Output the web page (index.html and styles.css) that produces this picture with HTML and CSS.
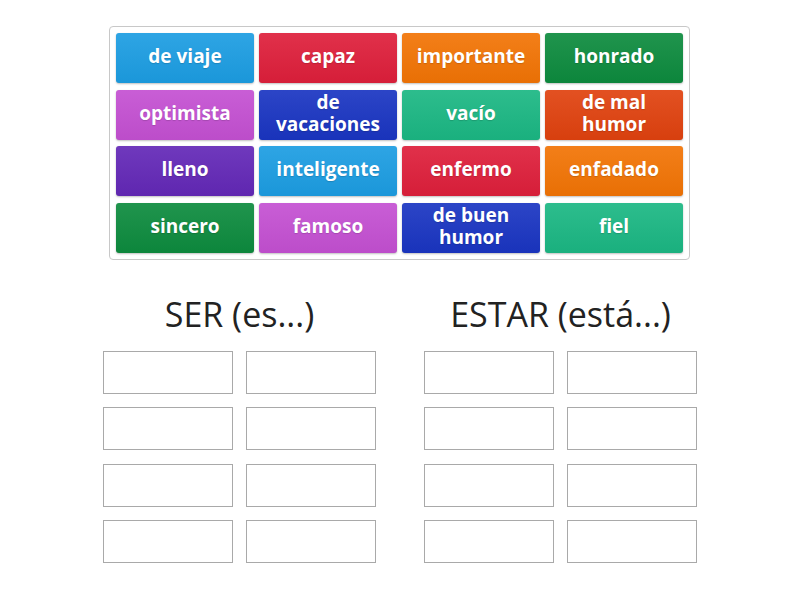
FILE: index.html
```html
<!DOCTYPE html>
<html lang="es">
<head>
<meta charset="utf-8">
<title>SER / ESTAR</title>
<link rel="stylesheet" href="styles.css">
</head>
<body>
<div class="page">
  <div class="bank">
    <div class="tile c-blue">de viaje</div>
    <div class="tile c-red">capaz</div>
    <div class="tile c-orange">importante</div>
    <div class="tile c-green">honrado</div>
    <div class="tile c-magenta">optimista</div>
    <div class="tile c-navy">de vacaciones</div>
    <div class="tile c-teal">vacío</div>
    <div class="tile c-redorange">de mal humor</div>
    <div class="tile c-purple">lleno</div>
    <div class="tile c-blue">inteligente</div>
    <div class="tile c-red">enfermo</div>
    <div class="tile c-orange">enfadado</div>
    <div class="tile c-green">sincero</div>
    <div class="tile c-magenta">famoso</div>
    <div class="tile c-navy">de buen humor</div>
    <div class="tile c-teal">fiel</div>
  </div>
  <div class="groups">
    <div class="group">
      <h2 class="group-title">SER (es...)</h2>
      <div class="slots">
        <div class="slot"></div><div class="slot"></div>
        <div class="slot"></div><div class="slot"></div>
        <div class="slot"></div><div class="slot"></div>
        <div class="slot"></div><div class="slot"></div>
      </div>
    </div>
    <div class="group">
      <h2 class="group-title">ESTAR (está...)</h2>
      <div class="slots">
        <div class="slot"></div><div class="slot"></div>
        <div class="slot"></div><div class="slot"></div>
        <div class="slot"></div><div class="slot"></div>
        <div class="slot"></div><div class="slot"></div>
      </div>
    </div>
  </div>
</div>
</body>
</html>
```

FILE: styles.css
```css
* { box-sizing: border-box; }
html, body { margin: 0; padding: 0; background: #fff; }
body {
  font-family: "Open Sans", "Liberation Sans", sans-serif;
  color: #222;
}
.page {
  width: 800px;
  height: 600px;
  padding-top: 26px;
  display: flex;
  flex-direction: column;
  align-items: center;
}
.bank {
  margin-left: -1px;
  display: grid;
  grid-template-columns: repeat(4, 138px);
  grid-auto-rows: 50px;
  column-gap: 5px;
  row-gap: 6.5px;
  padding: 6px;
  border: 1px solid #c8c8c8;
  border-radius: 4px;
  background: #fff;
}
.tile {
  display: flex;
  align-items: center;
  justify-content: center;
  text-align: center;
  color: #fff;
  font-weight: 700;
  font-size: 19px;
  line-height: 22px;
  border-radius: 3px;
  padding: 0 8px 4px;
  box-shadow: 0 1px 2px rgba(0,0,0,0.25);
  text-shadow: 0 1px 1px rgba(0,0,0,0.15);
  background-image: linear-gradient(to bottom, rgba(255,255,255,0.08), rgba(0,0,0,0.04));
}
.c-blue { background-color: #1c9de2; }
.c-red { background-color: #de1f3b; }
.c-orange { background-color: #f27405; }
.c-green { background-color: #0d8b3e; }
.c-magenta { background-color: #c450d2; }
.c-navy { background-color: #1a35c2; }
.c-teal { background-color: #1bb783; }
.c-redorange { background-color: #e0420f; }
.c-purple { background-color: #6328b7; }

.groups {
  margin-top: 34px;
  display: flex;
  gap: 48px;
}
.group {
  width: 273px;
  display: flex;
  flex-direction: column;
  align-items: center;
}
.group-title {
  margin: 0;
  font-weight: 400;
  font-size: 34px;
  line-height: 40px;
  color: #222;
}
.slots {
  margin-top: 17px;
  display: grid;
  grid-template-columns: repeat(2, 130px);
  grid-auto-rows: 43px;
  column-gap: 13px;
  row-gap: 13.5px;
}
.slot {
  border: 1px solid #a9a9a9;
  background: #fff;
}
```
